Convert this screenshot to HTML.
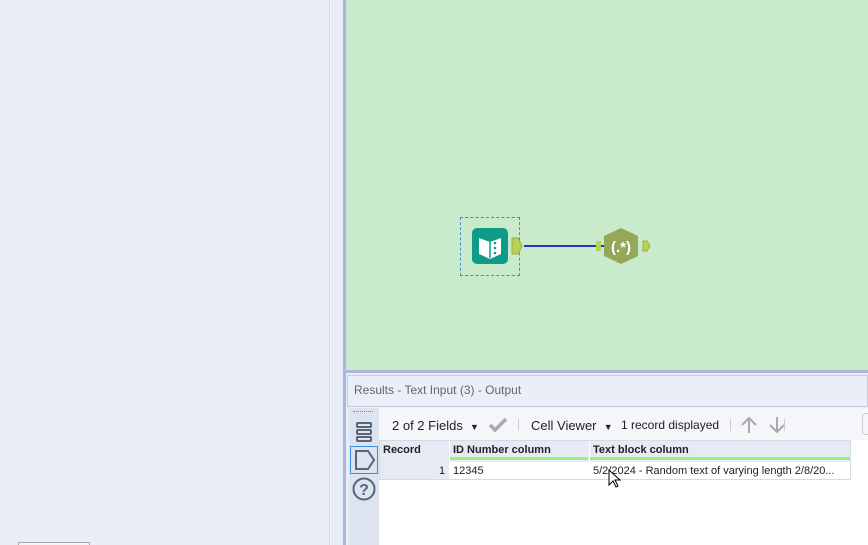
<!DOCTYPE html><html><head><style>
body{margin:0;width:868px;height:545px;position:relative;overflow:hidden;font-family:"Liberation Sans",sans-serif;background:#e9edf8}
div{position:absolute;box-sizing:border-box}
.t{font-size:12px;color:#222;white-space:nowrap}
</style></head><body>
<div style="left:0;top:0;width:329px;height:545px;background:#e9eef9"></div>
<div style="left:329px;top:0;width:2px;height:545px;background:#f6f7fb;border-left:1px solid #d4d8e2"></div>
<div style="left:18px;top:542px;width:72px;height:3px;border:1px solid #aaa;border-bottom:none;background:#f4f4f4"></div>
<div style="left:343px;top:0;width:3px;height:545px;background:#aab6dd"></div>
<div style="left:346px;top:0;width:522px;height:370px;background:#c9ebcb"></div>
<div style="left:346px;top:370px;width:522px;height:3px;background:#aab6dd"></div>
<div style="left:346px;top:373px;width:522px;height:172px;background:#e9edf8"></div>
<div style="left:347px;top:375px;width:521px;height:32px;border:1px solid #c8ccd6;background:#eaeef8"></div>
<div class="t" style="left:354px;top:383px;color:#666">Results - Text Input (3) - Output</div>
<div style="left:349px;top:408px;width:30px;height:137px;background:#dde3ef"></div>
<div style="left:353px;top:411px;width:20px;height:1px;border-top:1px dotted #888"></div>
<svg style="position:absolute;left:350px;top:418px" width="30" height="90">
<g fill="none" stroke="#55657a" stroke-width="2"><rect x="7" y="5" width="14" height="4" rx="1"/><rect x="7" y="12" width="14" height="4" rx="1"/><rect x="7" y="19" width="14" height="4" rx="1"/>
<path d="M6 33h12l6 9-6 9H6z"/><circle cx="14" cy="71" r="10.5"/></g>
<rect x="0.5" y="28.5" width="27" height="27" fill="none" stroke="#3b8de0" stroke-width="1"/>
<text x="14" y="77" font-size="16" font-weight="bold" text-anchor="middle" fill="#55657a" font-family="Liberation Sans">?</text></svg>
<div style="left:379px;top:408px;width:489px;height:137px;background:#fff"></div>
<div style="left:379px;top:408px;width:489px;height:32px;background:#f5f6f9"></div>
<div class="t" style="left:392px;top:418px;font-size:13px">2 of 2 Fields &nbsp;<span style="font-size:9px">▼</span></div>
<svg style="position:absolute;left:488px;top:417px" width="20" height="16"><path d="M2 8l5 5L18 2" fill="none" stroke="#aaa" stroke-width="3.5"/></svg>
<div style="left:518px;top:419px;width:1px;height:12px;background:#ccc"></div>
<div class="t" style="left:531px;top:418px;font-size:13px">Cell Viewer &nbsp;<span style="font-size:9px">▼</span></div>
<div class="t" style="left:621px;top:418px">1 record displayed</div>
<div style="left:730px;top:419px;width:1px;height:12px;background:#ccc"></div>
<svg style="position:absolute;left:739px;top:416px" width="50" height="18"><g fill="none" stroke="#aaa" stroke-width="2"><path d="M10 17V2M3 9l7-7 7 7M38 1v15M31 9l7 7 7-7"/></g></svg>
<div style="left:784px;top:419px;width:1px;height:12px;background:#ccc"></div>
<div style="left:862px;top:413px;width:10px;height:22px;border:1px solid #ccc;border-radius:4px"></div>
<div style="left:379px;top:440px;width:472px;height:40px;background:#e6eaf2;border:1px solid #d5dbe6"></div>
<div style="left:449px;top:441px;width:1px;height:38px;background:#fff"></div>
<div style="left:589px;top:441px;width:1px;height:38px;background:#fff"></div>
<div style="left:450px;top:457px;width:138px;height:3px;background:#9af07c"></div>
<div style="left:590px;top:457px;width:260px;height:3px;background:#9af07c"></div>
<div style="left:450px;top:462px;width:139px;height:17px;background:#fff"></div>
<div style="left:590px;top:462px;width:260px;height:17px;background:#fff"></div>
<div class="t" style="left:383px;top:444px;font-weight:bold;font-size:11px">Record</div>
<div class="t" style="left:453px;top:444px;font-weight:bold;font-size:11px">ID Number column</div>
<div class="t" style="left:593px;top:444px;font-weight:bold;font-size:11px">Text block column</div>
<div class="t" style="left:439px;top:465px;font-size:11px">1</div>
<div class="t" style="left:453px;top:465px;font-size:11px">12345</div>
<div class="t" style="left:593px;top:465px;font-size:11px">5/2/2024 - Random text of varying length 2/8/20...</div>
<svg style="position:absolute;left:608px;top:469px" width="14" height="20"><path d="M1 1v15l4-4 3 6 2-1-3-6h5z" fill="#fff" stroke="#000"/></svg>
<div style="left:460px;top:217px;width:60px;height:59px;border:1px dashed #3b8de0"></div>
<div style="left:472px;top:228px;width:36px;height:36px;background:#0f9a8a;border-radius:5px"></div>
<svg style="position:absolute;left:472px;top:228px" width="36" height="36"><path d="M7 10v16l11 5 11-5V10l-11 4z" fill="#fff"/><path d="M18 14v16" stroke="#0f9a8a" stroke-width="1.5"/><g fill="#0f9a8a"><circle cx="23" cy="15" r="1.3"/><circle cx="23" cy="20" r="1.3"/><circle cx="23" cy="25" r="1.3"/></g></svg>
<svg style="position:absolute;left:510px;top:225px" width="150" height="45"><path d="M2 13h6l4 8-4 8H2z" fill="#b7d155" stroke="#9bb040"/><path d="M14 21h84" stroke="#2436c9" stroke-width="2"/><path d="M86 16h5v10h-5z" fill="#b7d155"/><polygon points="111,3 128,11 128,31 111,39 94,31 94,11" fill="#95a85a"/><text x="111" y="27" font-size="15" font-weight="bold" fill="#fff" text-anchor="middle" font-family="Liberation Sans">(.*)</text><path d="M133 16h4l3 5-3 5h-4z" fill="#b7d155" stroke="#9bb040"/></svg>
</body></html>
